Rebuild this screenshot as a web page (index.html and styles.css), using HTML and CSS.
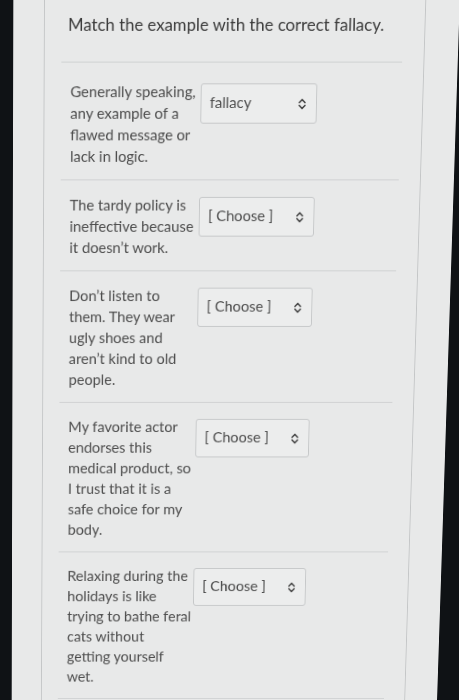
FILE: index.html
```html
<!DOCTYPE html>
<html lang="en">
<head>
    <meta charset="UTF-8">
    <meta name="viewport" content="width=device-width, initial-scale=1.0">
    <title>Quiz Question</title>
    <link rel="stylesheet" href="styles.css">
</head>
<body>
    <div class="device">
        <div class="screen">
            <div class="question">
                <div class="question-text">Match the example with the correct fallacy.</div>

                <div class="answers">
                    <div class="answer">
                        <div class="answer-label">Generally speaking, any example of a flawed message or lack in logic.</div>
                        <div class="select">
                            <span>fallacy</span>
                            <svg class="arrows" width="10" height="12" viewBox="0 0 10 12"><path d="M2 4.5 L5 1.5 L8 4.5 M2 7.5 L5 10.5 L8 7.5"/></svg>
                        </div>
                    </div>
                    <div class="answer">
                        <div class="answer-label">The tardy policy is ineffective because it doesn’t work.</div>
                        <div class="select">
                            <span>[ Choose ]</span>
                            <svg class="arrows" width="10" height="12" viewBox="0 0 10 12"><path d="M2 4.5 L5 1.5 L8 4.5 M2 7.5 L5 10.5 L8 7.5"/></svg>
                        </div>
                    </div>
                    <div class="answer">
                        <div class="answer-label">Don’t listen to them. They wear ugly shoes and aren’t kind to old people.</div>
                        <div class="select">
                            <span>[ Choose ]</span>
                            <svg class="arrows" width="10" height="12" viewBox="0 0 10 12"><path d="M2 4.5 L5 1.5 L8 4.5 M2 7.5 L5 10.5 L8 7.5"/></svg>
                        </div>
                    </div>
                    <div class="answer">
                        <div class="answer-label">My favorite actor endorses this medical product, so I trust that it is a safe choice for my body.</div>
                        <div class="select">
                            <span>[ Choose ]</span>
                            <svg class="arrows" width="10" height="12" viewBox="0 0 10 12"><path d="M2 4.5 L5 1.5 L8 4.5 M2 7.5 L5 10.5 L8 7.5"/></svg>
                        </div>
                    </div>
                    <div class="answer">
                        <div class="answer-label">Relaxing during the holidays is like trying to bathe feral cats without getting&nbsp;yourself wet.</div>
                        <div class="select">
                            <span>[ Choose ]</span>
                            <svg class="arrows" width="10" height="12" viewBox="0 0 10 12"><path d="M2 4.5 L5 1.5 L8 4.5 M2 7.5 L5 10.5 L8 7.5"/></svg>
                        </div>
                    </div>
                </div>
            </div>
        </div>
    </div>
</body>
</html>
```

FILE: styles.css
```css
body {
    margin: 0;
    padding: 0;
    background-color: #0f1215;
    font-family: Lato, "Open Sans", sans-serif;
    color: #444;
    overflow: hidden;
}

/* the screen is seen at a slight tilt */
.device {
    width: 520px;
    height: 780px;
    transform-origin: -22px 0;
    transform: perspective(1000px) rotateX(-3.85deg) scaleX(0.93);
}

.screen {
    margin-left: 16px;
    width: 480px;
    height: 780px;
    background-color: #e8e9e9;
}

.question {
    margin-left: 33px;
    width: 411px;
    height: 780px;
    padding: 0 23px 0 18px;
    box-sizing: border-box;
    border-left: 1px solid #c4c6c7;
    border-right: 1px solid #c4c6c7;
}

.question-text {
    padding: 12px 0 26px 7px;
    font-size: 18px;
    line-height: 24px;
    color: #3b3b3b;
    border-bottom: 1px solid #cfd1d2;
}

.answers {
    padding-top: 4px;
}

.answer {
    display: flex;
    align-items: flex-start;
    gap: 1px;
    padding: 14px 0 13px 10px;
    border-bottom: 1px solid #cfd1d2;
}

.answer-label {
    width: 140px;
    font-size: 16px;
    line-height: 22px;
    color: #4d4d4d;
}

.select {
    display: flex;
    align-items: center;
    justify-content: space-between;
    width: 126px;
    height: 41px;
    box-sizing: border-box;
    padding: 0 10px 4px 9px;
    margin-top: 3px;
    background-color: #eceded;
    border: 1px solid #c6c8c9;
    border-radius: 3px;
    font-size: 16px;
    color: #4d4d4d;
}

.arrows {
    margin-top: 4px;
}

.arrows path {
    fill: none;
    stroke: #444;
    stroke-width: 1.7;
    stroke-linecap: round;
    stroke-linejoin: round;
}
```
